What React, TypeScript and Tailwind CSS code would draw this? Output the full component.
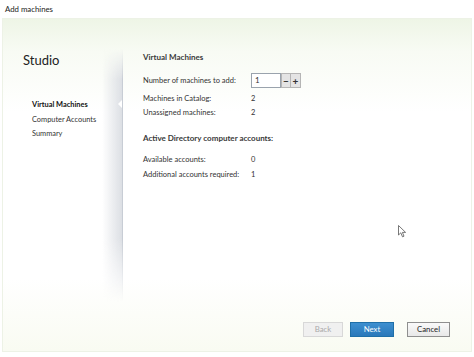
import React from "react";

export default function App() {
  const font = { fontFamily: 'Lato, "Noto Sans", sans-serif' };
  return (
    <div className="relative w-[474px] h-[357px] overflow-hidden bg-white text-[#333]" style={font}>
      <div className="h-[18px] px-[5px] pt-[3px] text-[7.8px] leading-[12px] text-[#222]">Add machines</div>
      <div className="mx-[2px] h-[334px] flex flex-col border border-[#edf2e6] bg-[linear-gradient(to_bottom,#eef5e6_0%,#f8fbf4_10%,#ffffff_28%,#ffffff_78%,#f9fbf2_100%)]">
        <div className="flex flex-1">
          <div className="relative w-[119px] shrink-0 pt-[32px] pl-[20px]">
            <div className="text-[13px] leading-[18px] text-[#222]">Studio</div>
            <div className="mt-[29px] pl-[9px] flex flex-col text-[7.4px] leading-[14px] whitespace-nowrap">
              <div className="font-bold text-[#111]">Virtual Machines</div>
              <div className="mt-[1px]">Computer Accounts</div>
              <div>Summary</div>
            </div>
            <div className="absolute right-0 top-[30px] bottom-[20px] w-[20px] bg-[linear-gradient(to_right,rgba(225,228,232,0),#dcdfe4)] [mask-image:linear-gradient(to_bottom,transparent,black_12%,black_75%,transparent)]" />
            <div className="absolute right-0 top-[81px] w-0 h-0 border-y-[4px] border-y-transparent border-r-[4px] border-r-white" />
          </div>
          <div className="relative flex-1 pt-[31px] pl-[21px]">
            <div className="absolute left-0 top-[30px] bottom-[20px] w-[1px] bg-[#c8cdd5] [mask-image:linear-gradient(to_bottom,transparent,black_12%,black_75%,transparent)]" />
            <div className="text-[8px] leading-[14px] font-bold text-[#3a3a3a]">Virtual Machines</div>
            <div className="mt-[9px] grid grid-cols-[108px_auto] text-[7.5px] text-[#333] items-center whitespace-nowrap">
              <div className="h-[15px] leading-[15px]">Number of machines to add:</div>
              <div className="flex h-[15px] text-[8px]">
                <div className="w-[30px] h-[15px] border border-[#9aa3ad] bg-white pl-[3px] leading-[13px]">1</div>
                <div className="w-[10px] h-[15px] border border-[#b5b5b5] bg-[#e4e4e4] flex items-center justify-center font-bold text-[10px] leading-none">−</div>
                <div className="w-[10px] h-[15px] border border-l-0 border-[#b5b5b5] bg-[#e4e4e4] flex items-center justify-center font-bold text-[10px] leading-none">+</div>
              </div>
              <div className="mt-[4px] leading-[14px]">Machines in Catalog:</div>
              <div className="mt-[4px] leading-[14px]">2</div>
              <div className="leading-[14px]">Unassigned machines:</div>
              <div className="leading-[14px]">2</div>
            </div>
            <div className="mt-[11px] text-[8px] leading-[14px] font-bold text-[#3a3a3a]">Active Directory computer accounts:</div>
            <div className="mt-[7px] grid grid-cols-[108px_auto] text-[7.5px] leading-[15px] text-[#333] whitespace-nowrap">
              <div>Available accounts:</div>
              <div>0</div>
              <div>Additional accounts required:</div>
              <div>1</div>
            </div>
          </div>
        </div>
        <div className="flex justify-end items-center gap-[7px] pr-[21px] pb-[14px] text-[7.8px]">
          <button className="w-[40px] h-[15px] border border-[#d8d8d8] bg-[#f0f0f0] text-[#aaa] leading-none">Back</button>
          <button className="w-[44px] h-[15px] border border-[#1f6fa8] bg-[linear-gradient(to_bottom,#3d8fd0,#2a78ba)] text-white leading-none">Next</button>
          <button className="ml-[6px] w-[43px] h-[15px] border border-[#8f8f8f] bg-[linear-gradient(to_bottom,#fafafa,#e8e8e8)] text-[#222] leading-none">Cancel</button>
        </div>
      </div>
      <svg className="absolute left-[398px] top-[225px]" width="9" height="13" viewBox="0 0 9 13">
        <path d="M0.5 0.5 L0.5 10 L2.8 7.8 L4.5 11.8 L6 11.2 L4.4 7.4 L7.6 7.4 Z" fill="white" stroke="#555" strokeWidth="0.8" />
      </svg>
    </div>
  );
}
